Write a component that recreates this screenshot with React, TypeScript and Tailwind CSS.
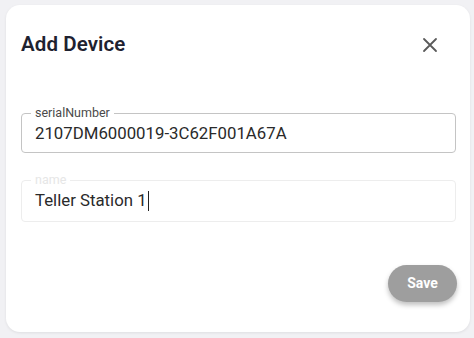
import React from "react";

export default function App() {
  return (
    <div className="w-[474px] h-[338px] bg-[#f1f1f4] pt-[5px] pl-[6px] pr-[4px] pb-[6px]" style={{ fontFamily: "Roboto, 'Liberation Sans', sans-serif" }}>
      <div className="w-full h-full bg-white rounded-[14px] shadow-[0_1px_3px_rgba(0,0,0,0.08)] pl-[15px] pr-[14px] flex flex-col">
        <div className="flex items-center justify-between h-[80px] pb-[1px]">
          <div className="text-[20.5px] font-semibold text-[#1e2230] tracking-[0.1px]">Add Device</div>
          <svg width="16" height="16" viewBox="0 0 16 16" className="mr-[18px]">
            <path d="M2 2 L14 14 M14 2 L2 14" stroke="#5a5a5a" strokeWidth="1.8" strokeLinecap="round" />
          </svg>
        </div>
        <div className="mt-[28px] relative h-[40px] border border-[#c4c4c4] rounded-[4px] flex items-center px-[13px]">
          <span className="absolute left-[9px] top-[-9px] bg-white px-[4px] text-[12.5px] leading-[15px] text-[#4a4a4a]">serialNumber</span>
          <span className="text-[16.8px] text-[#2a2a2a] pt-[1px]">2107DM6000019-3C62F001A67A</span>
        </div>
        <div className="mt-[27px] relative h-[42px] border border-[#ededed] rounded-[4px] flex items-center px-[13px]">
          <span className="absolute left-[9px] top-[-9px] bg-white px-[4px] text-[12.5px] leading-[15px] text-[#e6e6e6]">name</span>
          <span className="text-[16.8px] text-[#2a2a2a] flex items-center">Teller Station 1<span className="inline-block w-[1.5px] h-[20px] bg-[#222] ml-[1px]"></span></span>
        </div>
        <div className="flex justify-end mt-[43px] mr-[-1px]">
          <button className="w-[69px] h-[37px] rounded-full bg-[#9e9e9e] text-white text-[14px] font-bold shadow-[0_3px_5px_rgba(0,0,0,0.25)]">Save</button>
        </div>
      </div>
    </div>
  );
}
